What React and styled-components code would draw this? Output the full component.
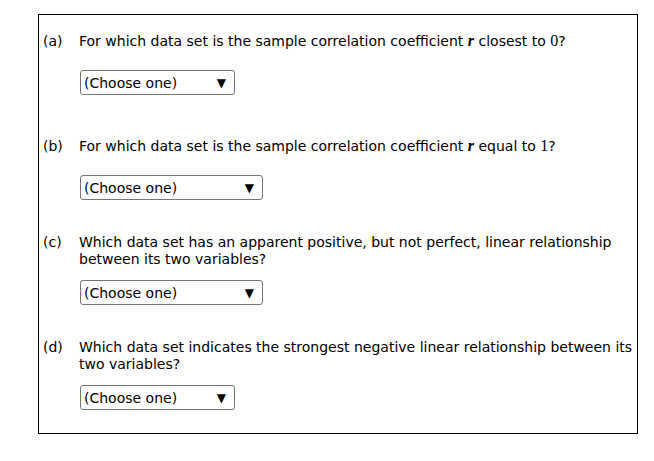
import React from "react";
import styled, { createGlobalStyle } from "styled-components";

const Global = createGlobalStyle`
	body {
		margin: 0;
		background: #fff;
		font-family: "DejaVu Sans", Verdana, sans-serif;
		color: #000;
	}
`;

const Page = styled.div`
	padding: 14px 0 0 38px;
`;

const Box = styled.div`
	box-sizing: border-box;
	width: 600px;
	height: 420px;
	border: 1px solid #000;
	padding: 9px 3px 0 4px;
`;

const Item = styled.div`
	display: grid;
	grid-template-columns: 36px 1fr;
	margin-bottom: 34px;
`;

const Label = styled.div`
	font-size: 14px;
	line-height: ${(p) => (p.$tall ? "34px" : "17px")};
`;

const Question = styled.div`
	font-size: 14px;
	line-height: ${(p) => (p.$tall ? "34px" : "17px")};
`;

const Var = styled.span`
	font-family: "Liberation Serif", "Times New Roman", serif;
	font-weight: bold;
	font-style: italic;
	font-size: 16px;
	line-height: 1;
`;

const Num = styled.span`
	font-family: "Liberation Serif", "Times New Roman", serif;
	font-size: 16px;
	line-height: 1;
`;

const Body = styled.div`
	display: flex;
	flex-direction: column;
	align-items: flex-start;
	gap: 12px;
`;

const Select = styled.div`
	display: flex;
	align-items: center;
	justify-content: space-between;
	box-sizing: border-box;
	width: ${(p) => p.$width}px;
	height: 25px;
	margin-left: 1px;
	padding: 0 8px 0 3px;
	border: 1px solid #767676;
	border-radius: 3px;
	font-size: 14px;
	background: #fff;
`;

const Arrow = styled.span`
	font-size: 12px;
	line-height: 1;
`;

function Choose({ width }) {
	return (
		<Select $width={width}>
			<span>(Choose one)</span>
			<Arrow>▼</Arrow>
		</Select>
	);
}

export default function App() {
	return (
		<>
			<Global />
			<Page>
				<Box>
					<Item>
						<Label $tall>(a)</Label>
						<Body>
							<Question $tall>
								For which data set is the sample correlation coefficient <Var>r</Var> closest to <Num>0</Num>?
							</Question>
							<Choose width={155} />
						</Body>
					</Item>
					<Item>
						<Label $tall>(b)</Label>
						<Body>
							<Question $tall>
								For which data set is the sample correlation coefficient <Var>r</Var> equal to <Num>1</Num>?
							</Question>
							<Choose width={183} />
						</Body>
					</Item>
					<Item>
						<Label>(c)</Label>
						<Body>
							<Question>
								Which data set has an apparent positive, but not perfect, linear relationship between its two variables?
							</Question>
							<Choose width={183} />
						</Body>
					</Item>
					<Item>
						<Label>(d)</Label>
						<Body>
							<Question>
								Which data set indicates the strongest negative linear relationship between its two variables?
							</Question>
							<Choose width={155} />
						</Body>
					</Item>
				</Box>
			</Page>
		</>
	);
}
